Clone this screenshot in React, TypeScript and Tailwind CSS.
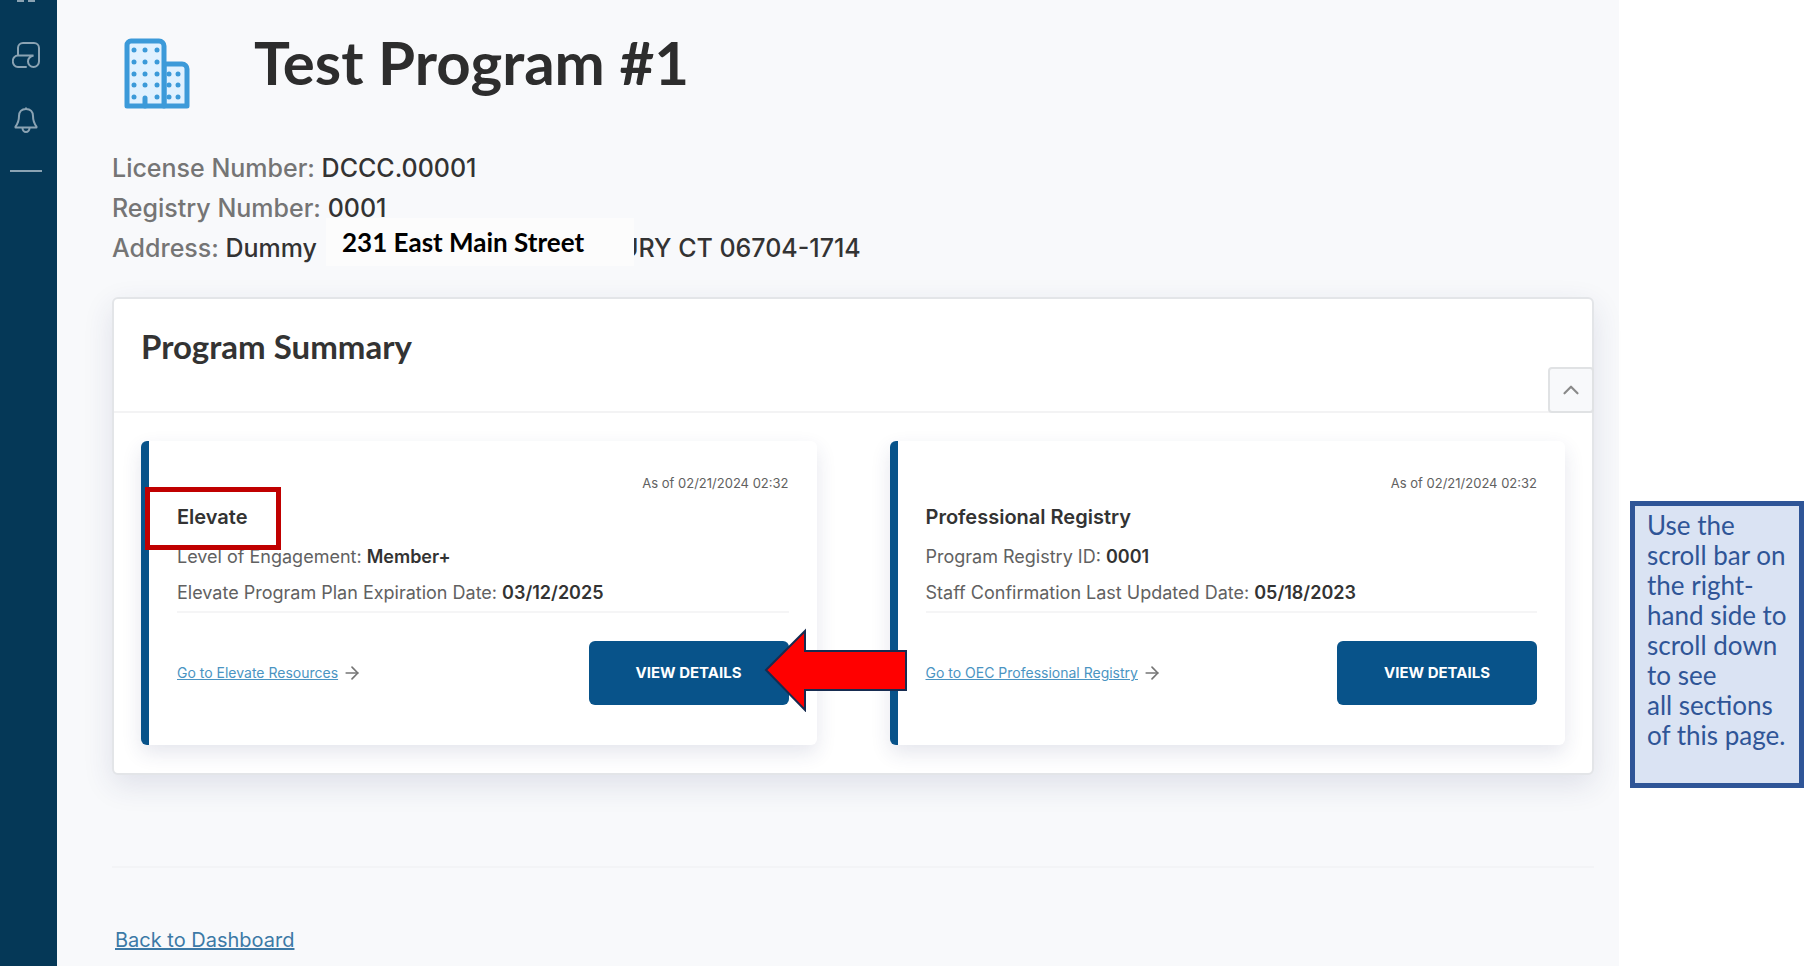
import { ArrowRight, ChevronUp } from 'lucide-react';

type ProgramCard = {
  title: string;
  asOf: string;
  rows: { label: string; value: string }[];
  link: string;
  highlighted?: boolean;
};

const cards: ProgramCard[] = [
  {
    title: 'Elevate',
    asOf: '02/21/2024 02:32',
    rows: [
      { label: 'Level of Engagement', value: 'Member+' },
      { label: 'Elevate Program Plan Expiration Date', value: '03/12/2025' },
    ],
    link: 'Go to Elevate Resources',
    highlighted: true,
  },
  {
    title: 'Professional Registry',
    asOf: '02/21/2024 02:32',
    rows: [
      { label: 'Program Registry ID', value: '0001' },
      { label: 'Staff Confirmation Last Updated Date', value: '05/18/2023' },
    ],
    link: 'Go to OEC Professional Registry',
  },
];

function ScrollIcon() {
  return (
    <svg width="28" height="26" viewBox="0 0 28 26" fill="none" stroke="currentColor" strokeWidth="2" strokeLinecap="round">
      <path d="M6 13.500V6a5 5 0 0 1 5-5h11a5 5 0 0 1 5 5v13.500a5.500 5.500 0 0 1-11 0c0-3 2-5 5.500-6H6a5 5.500 0 0 0 0 11.500h8" />
    </svg>
  );
}

function BellIcon() {
  return (
    <svg width="24" height="28" viewBox="0 0 24 28" fill="none" stroke="currentColor" strokeWidth="2" strokeLinejoin="round">
      <path d="M12 1.500v1.500M12 3c-4.500 0-7 3-7 7 0 6-1.500 8-3.500 10.500v1h21v-1C20.500 18 19 16 19 10c0-4-2.500-7-7-7z" />
      <path d="M8.500 22a3.500 4 0 0 0 7 0" />
    </svg>
  );
}

function BuildingIcon() {
  const dots = [
    ...[10, 21, 33].flatMap(x => [12, 24, 36, 47, 59].map(y => [x, y])),
    ...[45, 54].flatMap(x => [36, 47, 59].map(y => [x, y])),
  ].filter(([x, y]) => !(x === 21 && y === 59));
  return (
    <svg width="66" height="71" viewBox="0 0 66 71" className="mt-4 shrink-0">
      <g fill="#e0f1ff" stroke="#3c9ad9" strokeWidth="5" strokeLinejoin="round">
        <path d="M40 26h18a5 5 0 0 1 5 5v37H40z" />
        <path d="M3 68V7a4 4 0 0 1 4-4h28a5 5 0 0 1 5 5v60z" />
      </g>
      <path d="M21 68v-8" stroke="#3c9ad9" strokeWidth="5" strokeLinecap="round" />
      {dots.map(([x, y]) => (
        <circle key={`${x}-${y}`} cx={x} cy={y} r="2.500" fill="#3c9ad9" />
      ))}
    </svg>
  );
}

function SummaryCard({ card }: { card: ProgramCard }) {
  return (
    <article className="relative flex-1 rounded-md border-l-8 border-[#08538a] bg-white px-7 pt-8 pb-10 shadow-[0_8px_20px_rgba(40,50,110,0.12)]">
      <p className="text-right text-[13px] leading-5 text-[#616161]">As of {card.asOf}</p>
      <h3 className="relative mt-2.5 text-xl leading-7 font-semibold text-[#333333]">
        {card.title}
        {card.highlighted && (
          <span className="absolute -top-4 -left-8 h-[63px] w-[136px] border-[5px] border-[#c00000]" />
        )}
      </h3>
      <div className="mt-2 border-b-2 border-[#f5f5f6] text-lg leading-9 text-[#616161]">
        {card.rows.map(row => (
          <p key={row.label}>
            {row.label}: <strong className="font-semibold text-[#333333]">{row.value}</strong>
          </p>
        ))}
      </div>
      <div className="mt-7 flex items-center justify-between">
        <div className="flex items-center gap-1 text-[#757575]">
          <a href="#" className="text-sm text-[#4a94c2] underline">{card.link}</a>
          <ArrowRight size={20} />
        </div>
        <button className="h-16 w-[200px] rounded-md bg-[#08538a] text-[15px] font-bold text-white">
          VIEW DETAILS
        </button>
      </div>
      {card.highlighted && (
        <svg width="144" height="84" viewBox="0 0 144 84" className="absolute top-[187px] -right-[91px] z-10">
          <path d="M2 42L41 3v20h101v39H41v20z" fill="#ff0000" stroke="#172c51" strokeWidth="2" />
        </svg>
      )}
    </article>
  );
}

export default function App() {
  return (
    <div className="flex bg-white pb-2 font-['Inter',sans-serif]">
      {/* Icon rail */}
      <nav className="flex w-[57px] shrink-0 flex-col items-center bg-[#053857] pr-1.5 text-[#8ba3b3]">
        <div className="flex h-[2px] gap-1 overflow-hidden">
          <span className="w-[7px] bg-current" />
          <span className="w-[7px] bg-current" />
        </div>
        <a href="#" aria-label="Documents" className="mt-10">
          <ScrollIcon />
        </a>
        <a href="#" aria-label="Notifications" className="mt-[38px]">
          <BellIcon />
        </a>
        <hr className="mt-9 w-8 border-t-2 border-current" />
      </nav>

      <main className="min-w-0 flex-1 bg-[#f8f9fb] pt-[22px] pr-[25px] pb-3 pl-[55px]">
        <header className="flex items-start gap-16 pl-3">
          <BuildingIcon />
          <h1 className="font-['Lato',sans-serif] text-6xl leading-20 font-bold text-[#2d2d2d]">Test Program #1</h1>
        </header>

        <div className="mt-[39px] text-[25px] leading-10 font-medium text-[#757575]">
          <p>
            License Number: <span className="text-[#333333]">DCCC.00001</span>
          </p>
          <p>
            Registry Number: <span className="text-[#333333]">0001</span>
          </p>
          <div className="relative flex">
            <p className="w-[508px]">
              Address: <span className="text-[#333333]">Dummy</span>
            </p>
            <p className="text-[#333333]">URY CT 06704-1714</p>
            <p className="absolute -top-2.5 left-[214px] h-12 w-[308px] bg-[#fcfcfc] pl-4 font-['Lato',sans-serif] text-[26px] leading-12 font-bold text-black">
              231 East Main Street
            </p>
          </div>
        </div>

        <section className="mt-[29px] rounded-md border-2 border-[#e3e5e8] bg-white shadow-[0_10px_30px_rgba(40,50,110,0.12)]">
          <div className="flex justify-between border-b-2 border-[#f3f3f4] pl-[27px]">
            <h2 className="pt-[23px] font-['Lato',sans-serif] text-[33px] leading-12 font-bold text-[#333333]">Program Summary</h2>
            <button
              aria-label="Collapse"
              className="mt-17 -mr-0.5 -mb-0.5 flex size-[46px] items-center justify-center rounded border-2 border-[#e0e2e4] bg-[#f8f9fb] text-[#8a8a8a]"
            >
              <ChevronUp size={26} />
            </button>
          </div>
          <div className="flex gap-[73px] px-[27px] py-7">
            {cards.map(card => (
              <SummaryCard key={card.title} card={card} />
            ))}
          </div>
        </section>

        <hr className="mt-[91px] border-t-2 border-[#f3f4f6]" />
        <a href="#" className="mt-[58px] ml-[3px] inline-block text-xl leading-7 text-[#3c79a6] underline">Back to Dashboard</a>
      </main>

      <aside className="w-[196px] shrink-0 px-[11px] pt-[501px]">
        <p className="h-[287px] border-[5px] border-[#2f5597] bg-[#dae3f3] pt-1 pr-1 pl-3 font-['Lato',sans-serif] text-[26px] leading-[30px] text-[#2f5597]">
          Use the scroll bar on the right-hand side to scroll down to see<br />all sections of this page.
        </p>
      </aside>
    </div>
  );
}
